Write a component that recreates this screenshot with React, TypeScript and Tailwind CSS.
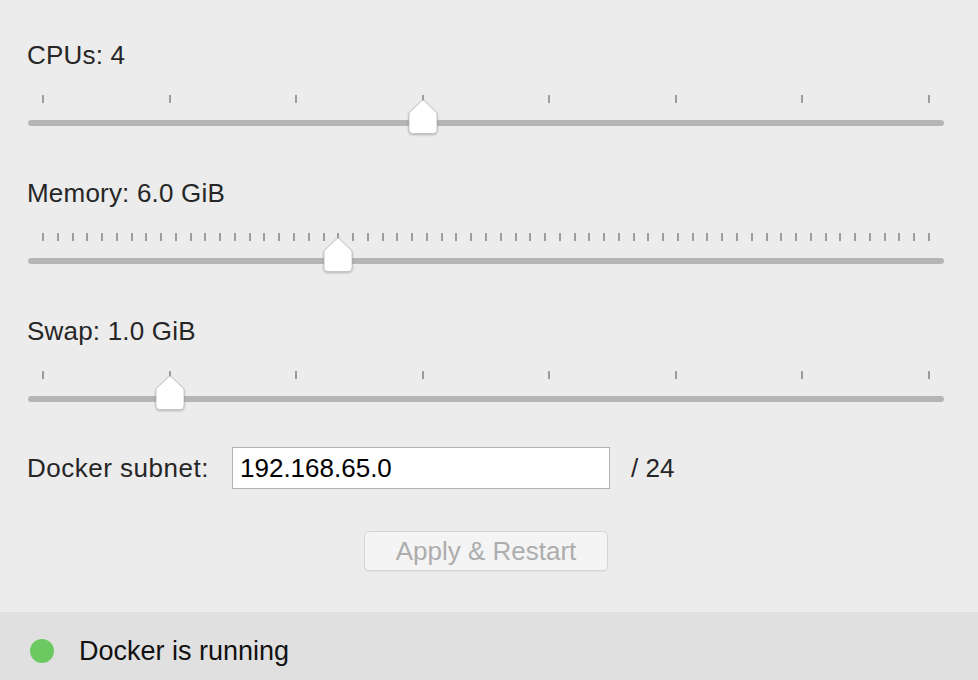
import React from "react";

type SliderDef = {
  label: string;
  ticks: number;
  index: number;
};

const sliders: SliderDef[] = [
  { label: "CPUs: 4", ticks: 8, index: 3 },
  { label: "Memory: 6.0 GiB", ticks: 61, index: 20 },
  { label: "Swap: 1.0 GiB", ticks: 8, index: 1 },
];

const TICK_START = 43;
const TICK_SPAN = 886;

function Thumb() {
  return (
    <svg width="32" height="36" viewBox="0 0 32 36" className="drop-shadow-[0_1px_1px_rgba(0,0,0,0.25)]">
      <path
        d="M16 1.2 Q16.6 1.2 17.2 1.8 L30 14 L30 31 Q30 34.5 26.5 34.5 L5.5 34.5 Q2 34.5 2 31 L2 14 L14.8 1.8 Q15.4 1.2 16 1.2 Z"
        fill="#ffffff"
        stroke="#bdbdbd"
        strokeWidth="0.8"
      />
    </svg>
  );
}

function Slider({ def }: { def: SliderDef }) {
  const center = TICK_START + (def.index / (def.ticks - 1)) * TICK_SPAN;
  return (
    <div className="relative mt-[25px] h-[44px]">
      <div className="ml-[15px] flex w-[888px] justify-between">
        {Array.from({ length: def.ticks }).map((_, i) => (
          <div key={i} className="h-[8px] w-[2px] bg-[#9c9c9c]" />
        ))}
      </div>
      <div className="mt-[17px] ml-[1px] h-[6px] w-[916px] rounded-full bg-[#b5b5b5]" />
      <div className="absolute top-[4px]" style={{ left: center - 27 - 16 }}>
        <Thumb />
      </div>
    </div>
  );
}

export default function App() {
  return (
    <div
      className="flex h-[680px] w-full flex-col overflow-hidden bg-[#ececec] text-[#262626]"
      style={{ fontFamily: '"Liberation Sans", Arial, sans-serif' }}
    >
      <div className="flex-1 pl-[27px] pt-[40px]">
        {sliders.map((s, i) => (
          <div key={s.label} className={i > 0 ? "mt-[39px]" : ""}>
            <div className="h-[30px] text-[26px] leading-[30px] tracking-[0.2px]">{s.label}</div>
            <Slider def={s} />
          </div>
        ))}

        <div className="mt-[32px] flex h-[42px] items-center">
          <div className="w-[205px] text-[26px] leading-[30px] tracking-[0.5px]">Docker subnet:</div>
          <input
            readOnly
            value="192.168.65.0"
            className="h-[42px] w-[378px] border border-[#b3b3b3] bg-white pl-[7px] text-[26px] text-black outline-none"
            style={{ fontFamily: '"Liberation Sans", Arial, sans-serif' }}
          />
          <div className="ml-[21px] text-[26px] leading-[30px]">/ 24</div>
        </div>

        <button
          disabled
          className="mt-[42px] ml-[337px] flex h-[40px] w-[244px] items-center justify-center rounded-[5px] border border-[#d6d6d6] bg-[#f4f4f4] text-[26px] text-[#adadad] shadow-[0_1px_1px_rgba(0,0,0,0.06)]"
        >
          Apply &amp; Restart
        </button>
      </div>

      <div className="flex h-[68px] items-center bg-[#e0e0e0] pl-[30px] pt-[10px]">
        <div className="h-[24px] w-[24px] rounded-full bg-[#6cc961]" />
        <div className="ml-[25px] text-[27px] leading-[30px] text-[#111111]">Docker is running</div>
      </div>
    </div>
  );
}
